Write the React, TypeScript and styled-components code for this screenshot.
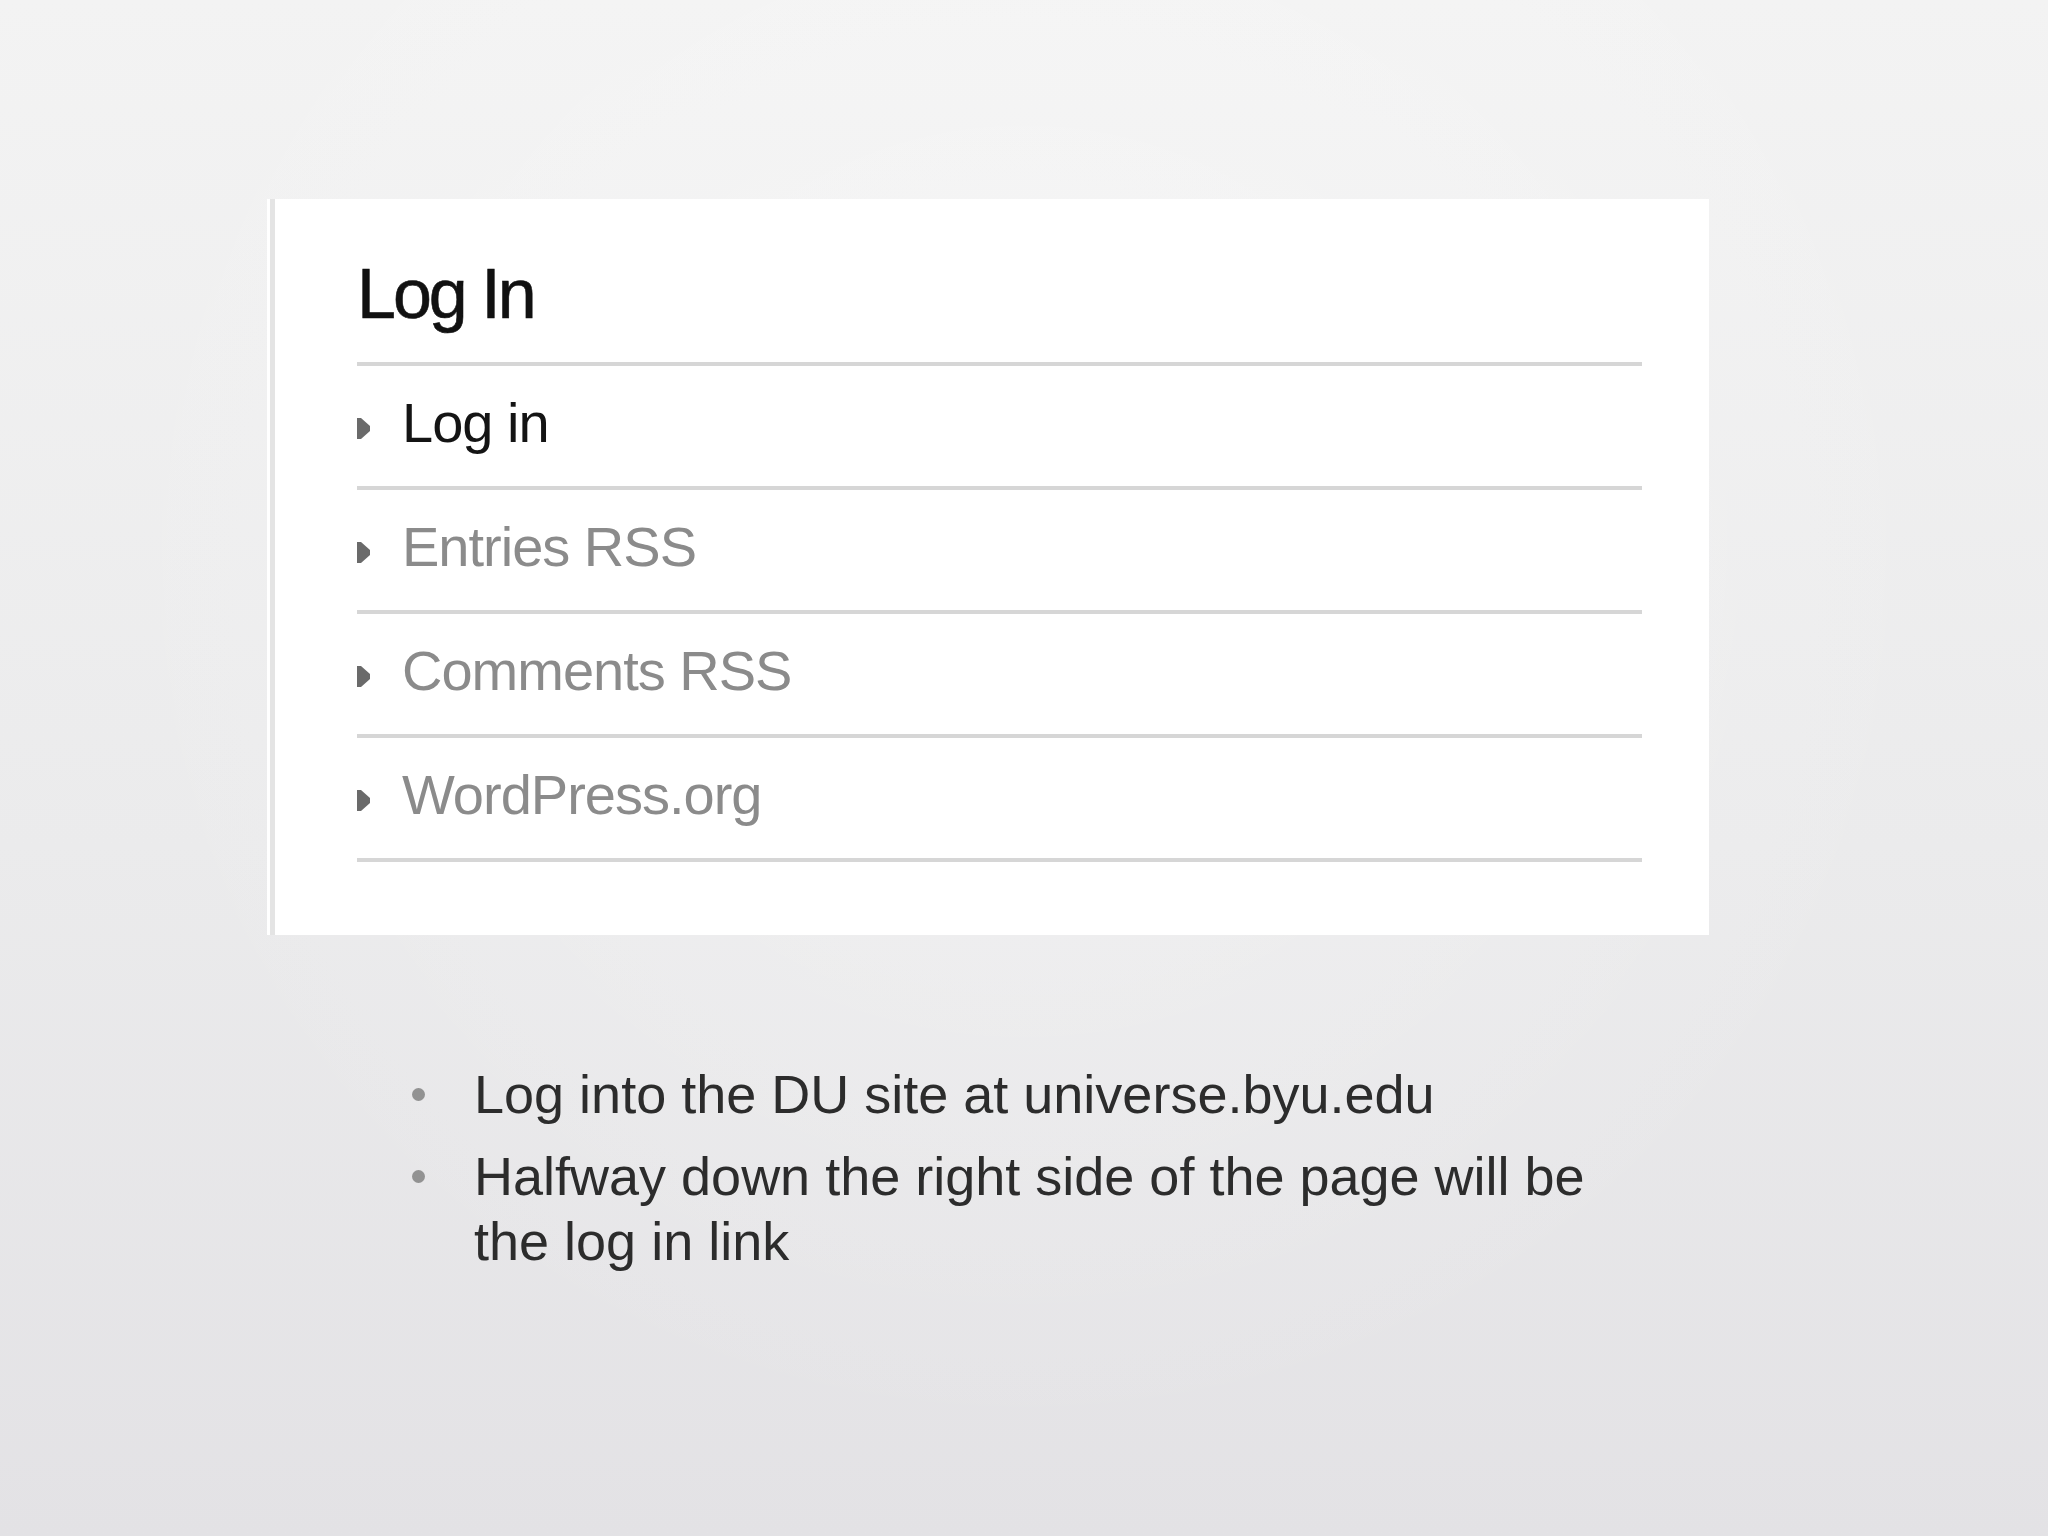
import React from 'react';
import styled, { createGlobalStyle } from 'styled-components';

const GlobalStyle = createGlobalStyle`
  html, body {
    margin: 0;
    padding: 0;
  }
  body {
    font-family: "Liberation Sans", Arial, sans-serif;
  }
`;

const Slide = styled.div`
  width: 2048px;
  height: 1536px;
  box-sizing: border-box;
  padding-top: 199px;
  overflow: hidden;
  background:
    radial-gradient(ellipse at 50% 35%, rgba(255, 255, 255, 0.35) 0%, rgba(255, 255, 255, 0) 65%),
    linear-gradient(180deg, #f3f3f3 0%, #ebebec 55%, #e3e2e5 100%);
`;

const Panel = styled.div`
  margin-left: 267px;
  width: 1442px;
  height: 736px;
  box-sizing: border-box;
  padding-left: 3px;
  background: #ffffff;
  display: flex;
`;

const PanelBody = styled.div`
  flex: 1;
  border-left: 5px solid #e4e4e4;
  padding: 55px 67px 0 82px;
`;

const WidgetTitle = styled.h2`
  margin: 0;
  padding-bottom: 28px;
  font-family: "Liberation Sans", Arial, sans-serif;
  font-weight: normal;
  font-size: 70px;
  line-height: 80px;
  letter-spacing: -3px;
  color: #111111;
  -webkit-text-stroke: 0.6px #111111;
  border-bottom: 4px solid #d6d6d6;
`;

const LinkList = styled.ul`
  list-style: none;
  margin: 0;
  padding: 0;
`;

const LinkRow = styled.li`
  height: 120px;
  display: flex;
  align-items: center;
  border-bottom: 4px solid #d6d6d6;
`;

const Arrow = styled.svg`
  flex: 0 0 13px;
  width: 13px;
  height: 21px;
  margin-top: 4px;
  margin-right: 32px;
  fill: #6a6a6a;
`;

const LinkLabel = styled.span<{ $active?: boolean }>`
  font-size: 56px;
  line-height: 114px;
  margin-bottom: 6px;
  letter-spacing: -1px;
  color: ${(p) => (p.$active ? '#141414' : '#8b8b8b')};
`;

const Notes = styled.ul`
  list-style: none;
  margin: 127px 0 0 400px;
  padding: 0;
  width: 1240px;
  display: flex;
  flex-direction: column;
  gap: 17px;
`;

const Note = styled.li`
  display: flex;
  align-items: flex-start;
`;

const Dot = styled.span`
  flex: 0 0 13px;
  width: 13px;
  height: 13px;
  margin: 26px 49px 0 12px;
  border-radius: 50%;
  background: #929292;
`;

const NoteText = styled.span`
  width: 1166px;
  font-size: 54px;
  line-height: 1.2;
  color: #2c2c2c;
`;

const links = [
  { label: 'Log in', active: true },
  { label: 'Entries RSS' },
  { label: 'Comments RSS' },
  { label: 'WordPress.org' },
];

const notes = [
  'Log into the DU site at universe.byu.edu',
  'Halfway down the right side of the page will be the log in link',
];

export default function App() {
  return (
    <>
      <GlobalStyle />
      <Slide>
        <Panel>
          <PanelBody>
            <WidgetTitle>Log In</WidgetTitle>
            <LinkList>
              {links.map((l) => (
                <LinkRow key={l.label}>
                  <Arrow viewBox="0 0 13 21">
                    <path d="M0 0 H4 L13 8 V13 L4 21 H0 Z" />
                  </Arrow>
                  <LinkLabel $active={l.active}>{l.label}</LinkLabel>
                </LinkRow>
              ))}
            </LinkList>
          </PanelBody>
        </Panel>
        <Notes>
          {notes.map((n) => (
            <Note key={n}>
              <Dot />
              <NoteText>{n}</NoteText>
            </Note>
          ))}
        </Notes>
      </Slide>
    </>
  );
}
